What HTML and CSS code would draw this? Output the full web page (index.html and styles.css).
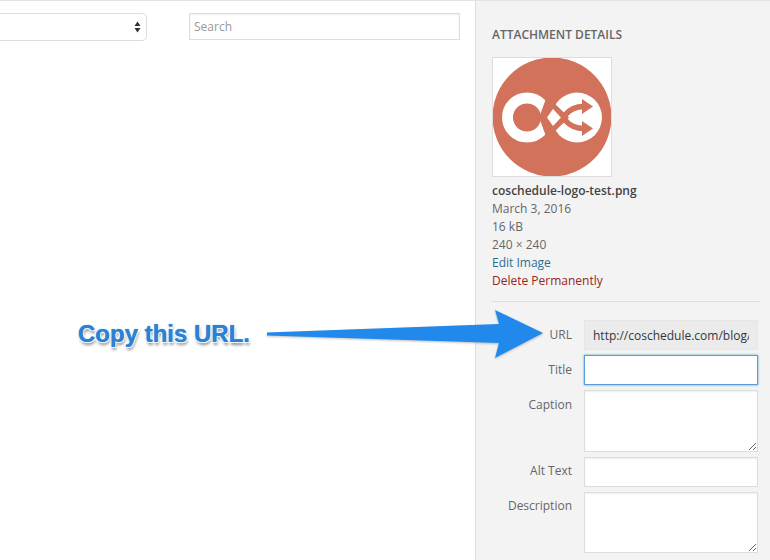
FILE: index.html
```html
<!DOCTYPE html>
<html lang="en">
<head>
  <meta charset="UTF-8" />
  <title>Media Library - Attachment Details</title>
  <link rel="stylesheet" href="styles.css">
</head>
<body>
  <div class="frame">
    <div class="browser">
      <div class="toolbar">
        <div class="select-box">
          <svg class="select-arrows" width="7" height="12" viewBox="0 0 7 12"><path d="M3.5 0.5 L6.5 5 L0.5 5 Z M0.5 7 L6.5 7 L3.5 11.5 Z" fill="#333"/></svg>
        </div>
        <input type="text" class="search" placeholder="Search" />
      </div>
    </div>

    <div class="details">
      <h2 class="details-title">Attachment Details</h2>
      <div class="thumb">
        <svg width="118" height="118" viewBox="1 1 118 118">
          <circle cx="60" cy="60" r="59.500" fill="#d2725a"/>
          <circle cx="35" cy="60.500" r="19.500" fill="none" stroke="#fff" stroke-width="11"/>
          <circle cx="85" cy="60.500" r="25" fill="#fff"/>
          <path d="M47 60.500 L55 39 L77 60.500 L55 82 Z" fill="#d2725a"/>
          <path d="M55 60.500 L61 52 L69 60.500 L61 69 Z" fill="#fff"/>
          <path d="M73 58 C78 52 84 49.500 92 49.500 M73 63 C78 69 84 71.500 92 71.500" fill="none" stroke="#d2725a" stroke-width="5.500"/>
          <path d="M90 42 L101 49.500 L90 57 Z M90 64 L101 71.500 L90 79 Z" fill="#d2725a"/>
        </svg>
      </div>
      <div class="file-info">
        <div class="filename">coschedule-logo-test.png</div>
        <div>March 3, 2016</div>
        <div>16 kB</div>
        <div>240 × 240</div>
        <a class="edit-link" href="#">Edit Image</a>
        <a class="delete-link" href="#">Delete Permanently</a>
      </div>
      <hr class="divider" />
      <form class="fields">
        <label class="field-label">URL</label>
        <input type="text" class="field-input url-input" value="http://coschedule.com/blog/wp-content/uploads/2016/03/coschedule-logo-test.png" readonly />
        <label class="field-label">Title</label>
        <input type="text" class="field-input title-input" />
        <label class="field-label">Caption</label>
        <textarea class="field-input caption-input"></textarea>
        <label class="field-label field-label-tight">Alt Text</label>
        <input type="text" class="field-input alt-input" />
        <label class="field-label field-label-tight">Description</label>
        <textarea class="field-input desc-input"></textarea>
      </form>
    </div>

    <div class="callout">Copy this URL.</div>
    <svg class="callout-arrow" width="290" height="60" viewBox="260 305 290 60">
      <path d="M267 332.500 L499 324 L495 310 L543 333 L495 358 L499 343 L267 335.500 Z" fill="#2188ec"/>
    </svg>
  </div>
</body>
</html>
```

FILE: styles.css
```css
* {
  box-sizing: border-box;
}
body {
  margin: 0;
  font-family: 'Open Sans', sans-serif;
  font-size: 12px;
  color: #444;
}
.frame {
  position: relative;
  display: flex;
  width: 770px;
  height: 560px;
  overflow: hidden;
  padding-top: 2px;
  background: #fff;
  border-top: 1px solid #e2e2e2;
}
.browser {
  width: 475px;
  flex-shrink: 0;
}
.toolbar {
  display: flex;
  justify-content: space-between;
  align-items: flex-start;
  padding: 10px 15px 0 0;
}
.select-box {
  display: flex;
  justify-content: flex-end;
  align-items: center;
  width: 147px;
  height: 28px;
  padding-right: 5px;
  border: 1px solid #ddd;
  border-left: none;
  border-radius: 0 5px 5px 0;
  background: #fff;
}
.search {
  width: 271px;
  height: 27px;
  padding: 0 4px;
  border: 1px solid #ddd;
  font-family: inherit;
  font-size: 12px;
  box-shadow: inset 0 1px 2px rgba(0, 0, 0, 0.07);
}
.search::placeholder {
  color: #999;
}
.details {
  flex: 1;
  margin-top: -2px;
  padding: 0 12px 0 16px;
  background: #f3f3f3;
  border-left: 1px solid #ddd;
}
.details-title {
  margin: 24px 0 12px;
  font-size: 12px;
  font-weight: 600;
  line-height: 20px;
  text-transform: uppercase;
  color: #666;
}
.thumb {
  width: 120px;
  height: 120px;
  padding: 0;
  border: 1px solid #ddd;
  background: #fff;
}
.thumb svg {
  display: block;
}
.file-info {
  margin-top: 5px;
  line-height: 18px;
  color: #666;
}
.filename {
  font-weight: 600;
  color: #444;
}
.edit-link,
.delete-link {
  display: block;
  text-decoration: none;
}
.edit-link {
  color: #2a6f92;
}
.delete-link {
  color: #992222;
}
.divider {
  margin: 11px -2px 18px 0;
  border: none;
  border-top: 1px solid #ddd;
}
.fields {
  display: grid;
  grid-template-columns: 80px 174px;
  column-gap: 12px;
  row-gap: 5px;
}
.field-label {
  padding-top: 6px;
  line-height: 18px;
  text-align: right;
  color: #666;
}
.field-label-tight {
  padding-top: 5px;
}
.field-input {
  display: block;
  width: 174px;
  height: 30px;
  margin: 0;
  padding: 0 8px;
  border: 1px solid #ddd;
  background: #fff;
  font-family: inherit;
  font-size: 12px;
  color: #32373c;
  box-shadow: inset 0 1px 2px rgba(0, 0, 0, 0.07);
  outline: none;
}
.url-input {
  border-color: #e6e6e6;
  background: #ebebeb;
  box-shadow: none;
}
.title-input {
  border-color: #5b9dd9;
  box-shadow: 0 0 2px rgba(30, 140, 190, 0.8);
}
.caption-input {
  height: 62px;
}
.desc-input {
  height: 61px;
}
.callout {
  position: absolute;
  left: 78px;
  top: 318px;
  font-family: 'Liberation Sans', sans-serif;
  font-size: 24px;
  font-weight: 700;
  line-height: 30px;
  color: #2e80d2;
  text-shadow: 0 0 1px #2e80d2, 1px 1px 0 #fff, -1px -1px 0 #fff, 1px -1px 0 #fff, -1px 1px 0 #fff, 1px 3px 3px rgba(0, 0, 0, 0.45);
}
.callout-arrow {
  position: absolute;
  left: 260px;
  top: 304px;
  filter: drop-shadow(0 1px 1px rgba(0, 0, 0, 0.25));
}
```
